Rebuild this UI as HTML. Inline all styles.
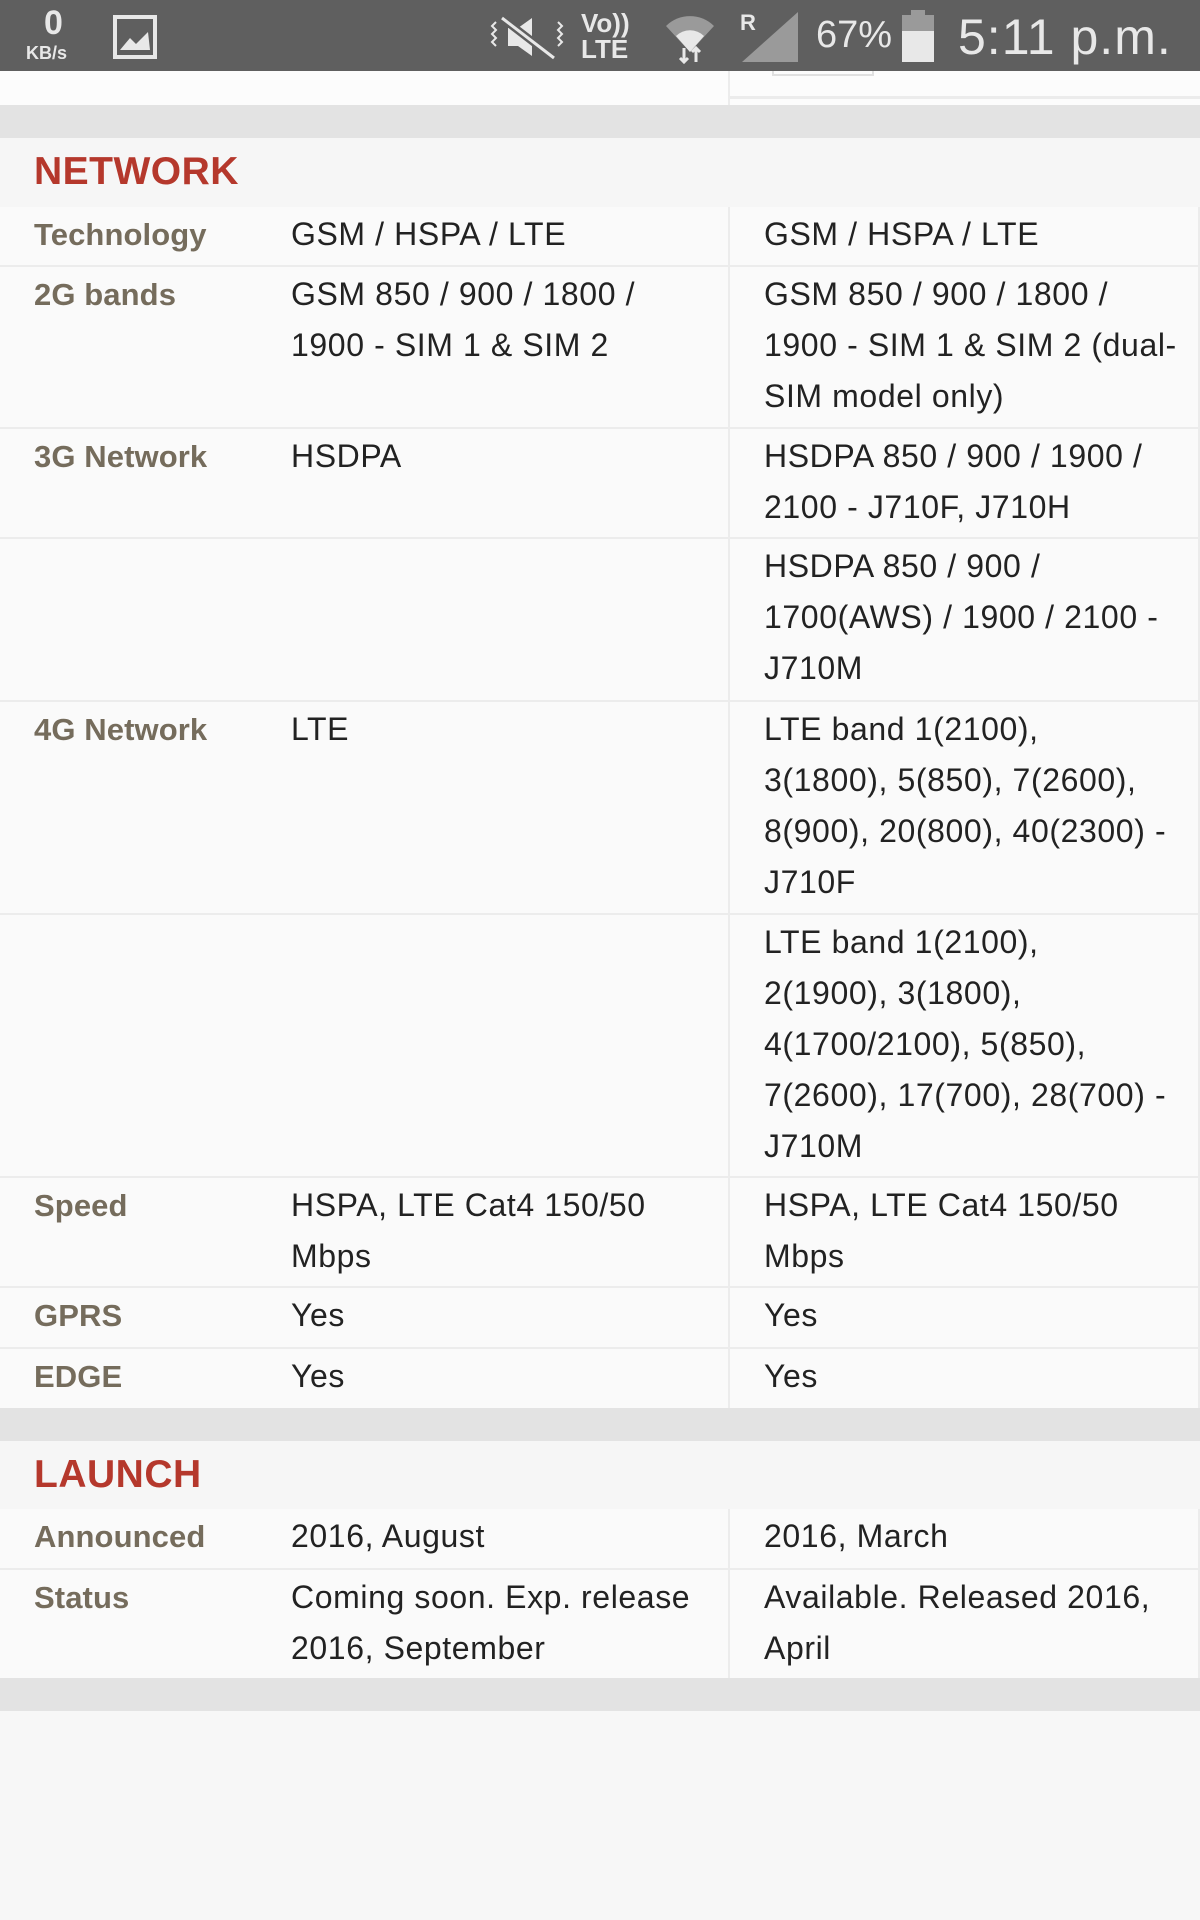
<!DOCTYPE html>
<html><head><meta charset="utf-8"><style>
*{margin:0;padding:0;box-sizing:border-box}
body{width:1200px;height:1920px;background:#f7f7f7;font-family:"Liberation Sans",sans-serif;position:relative;overflow:hidden}
.sb{position:absolute;left:0;top:0;width:1200px;height:71px;background:#5f5f5f;color:#e8e8e8}
.sb div,.sb svg{position:absolute}
.row{position:absolute;left:0;width:1200px;background:#fafafa;border-bottom:2px solid #ececec}
.row .l{position:absolute;left:34px;top:2px;font-weight:bold;color:#756c5c;font-size:31px;line-height:51px;letter-spacing:0.1px}
.row .a{position:absolute;left:291px;top:2px;width:430px;color:#222;font-size:32px;line-height:51px;letter-spacing:0.6px}
.row .b{position:absolute;left:764px;top:2px;width:430px;color:#222;font-size:32px;line-height:51px;letter-spacing:0.6px}
.row:after{content:"";position:absolute;left:728px;top:0;bottom:-2px;width:2px;background:#ececec}
.row:before{content:"";position:absolute;right:0;top:0;bottom:-2px;width:2px;background:#ececec}
.band{position:absolute;left:0;width:1200px;background:#e3e3e3}
.hd{position:absolute;left:0;width:1200px;background:#f6f6f6}
.hd span{position:absolute;left:34px;font-weight:bold;color:#b5382c;font-size:39px;letter-spacing:0.5px}
</style></head><body>
<div class="sb">
<div style="left:44px;top:4px;font-size:34px;font-weight:bold">0</div>
<div style="left:26px;top:43px;font-size:18px;font-weight:bold">KB/s</div>
<svg style="left:112px;top:14px" width="46" height="46" viewBox="0 0 46 46"><rect x="3" y="3" width="40" height="40" fill="none" stroke="#e8e8e8" stroke-width="4"/><path d="M8 36 L18 24 L24 30 L36 18 L38 36 Z" fill="#e8e8e8"/></svg>
<svg style="left:488px;top:14px" width="80" height="46" viewBox="0 0 80 46"><path d="M20 14h10l14-10v38L30 32H20z" fill="#e8e8e8"/><path d="M14 4 L66 44" stroke="#5f5f5f" stroke-width="8"/><path d="M14 4 L66 44" stroke="#e8e8e8" stroke-width="3"/><path d="M8 8l-4 4 4 4-4 4 4 4-4 4 4 4M70 8l4 4-4 4 4 4-4 4 4 4-4 4" stroke="#e8e8e8" stroke-width="2" fill="none"/></svg>
<div style="left:581px;top:10px;font-size:26px;font-weight:bold;line-height:26px">Vo))</div>
<div style="left:581px;top:36px;font-size:26px;font-weight:bold;line-height:26px">LTE</div>
<svg style="left:662px;top:8px" width="56" height="56" viewBox="0 0 56 56"><path d="M4 18 A34 34 0 0 1 52 18 L28 44 Z" fill="#9a9a9a"/><path d="M14 28 A20 20 0 0 1 42 28 L28 44Z" fill="#e8e8e8"/><path d="M22 40v14M18 50l4 4 4-4M34 54V40M30 44l4-4 4 4" stroke="#e8e8e8" stroke-width="3" fill="none"/></svg>
<div style="left:740px;top:10px;font-size:22px;font-weight:bold">R</div>
<svg style="left:742px;top:12px" width="56" height="50"><path d="M56 0V50H0Z" fill="#9a9a9a"/></svg>
<div style="left:816px;top:14px;font-size:38px">67%</div>
<svg style="left:900px;top:10px" width="36" height="52"><rect x="11" y="0" width="14" height="6" fill="#9a9a9a"/><rect x="2" y="5" width="32" height="16" fill="#9a9a9a"/><rect x="2" y="21" width="32" height="31" fill="#e8e8e8"/></svg>
<div style="left:958px;top:8px;font-size:50px;font-weight:normal;letter-spacing:1px">5:11 p.m.</div>
</div>
<div style="position:absolute;left:0;top:71px;width:1200px;height:34px;background:#fcfcfc"></div>
<div style="position:absolute;left:728px;top:71px;width:2px;height:34px;background:#ececec"></div>
<div style="position:absolute;left:730px;top:96px;width:470px;height:3px;background:#ececec"></div>
<div style="position:absolute;left:772px;top:71px;width:102px;height:5px;border:2px solid #e0e0e0;border-top:0"></div>
<div class="band" style="top:105px;height:33px"></div>
<div class="hd" style="top:138px;height:69px"><span style="top:12px">NETWORK</span></div>
<div class="row" style="top:207px;height:60px"><div class="l">Technology</div><div class="a">GSM / HSPA / LTE</div><div class="b">GSM / HSPA / LTE</div></div>
<div class="row" style="top:267px;height:162px"><div class="l">2G bands</div><div class="a">GSM 850 / 900 / 1800 /<br>1900 - SIM 1 &amp; SIM 2</div><div class="b">GSM 850 / 900 / 1800 /<br>1900 - SIM 1 &amp; SIM 2 (dual-<br>SIM model only)</div></div>
<div class="row" style="top:429px;height:110px"><div class="l">3G Network</div><div class="a">HSDPA</div><div class="b">HSDPA 850 / 900 / 1900 /<br>2100 - J710F, J710H</div></div>
<div class="row" style="top:539px;height:163px"><div class="b">HSDPA 850 / 900 /<br>1700(AWS) / 1900 / 2100 -<br>J710M</div></div>
<div class="row" style="top:702px;height:213px"><div class="l">4G Network</div><div class="a">LTE</div><div class="b">LTE band 1(2100),<br>3(1800), 5(850), 7(2600),<br>8(900), 20(800), 40(2300) -<br>J710F</div></div>
<div class="row" style="top:915px;height:263px"><div class="b">LTE band 1(2100),<br>2(1900), 3(1800),<br>4(1700/2100), 5(850),<br>7(2600), 17(700), 28(700) -<br>J710M</div></div>
<div class="row" style="top:1178px;height:110px"><div class="l">Speed</div><div class="a">HSPA, LTE Cat4 150/50<br>Mbps</div><div class="b">HSPA, LTE Cat4 150/50<br>Mbps</div></div>
<div class="row" style="top:1288px;height:61px"><div class="l">GPRS</div><div class="a">Yes</div><div class="b">Yes</div></div>
<div class="row" style="top:1349px;height:59px;border-bottom:0"><div class="l">EDGE</div><div class="a">Yes</div><div class="b">Yes</div></div>
<div class="band" style="top:1408px;height:33px"></div>
<div class="hd" style="top:1441px;height:68px"><span style="top:12px">LAUNCH</span></div>
<div class="row" style="top:1509px;height:61px"><div class="l">Announced</div><div class="a">2016, August</div><div class="b">2016, March</div></div>
<div class="row" style="top:1570px;height:108px;border-bottom:0"><div class="l">Status</div><div class="a">Coming soon. Exp. release<br>2016, September</div><div class="b">Available. Released 2016,<br>April</div></div>
<div class="band" style="top:1678px;height:33px"></div>
</body></html>
